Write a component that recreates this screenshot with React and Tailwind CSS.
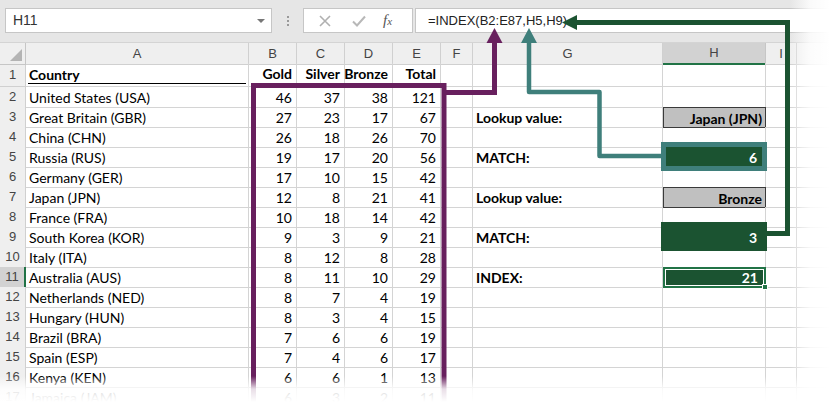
const data = [
  ["United States (USA)", 46, 37, 38, 121],
  ["Great Britain (GBR)", 27, 23, 17, 67],
  ["China (CHN)", 26, 18, 26, 70],
  ["Russia (RUS)", 19, 17, 20, 56],
  ["Germany (GER)", 17, 10, 15, 42],
  ["Japan (JPN)", 12, 8, 21, 41],
  ["France (FRA)", 10, 18, 14, 42],
  ["South Korea (KOR)", 9, 3, 9, 21],
  ["Italy (ITA)", 8, 12, 8, 28],
  ["Australia (AUS)", 8, 11, 10, 29],
  ["Netherlands (NED)", 8, 7, 4, 19],
  ["Hungary (HUN)", 8, 3, 4, 15],
  ["Brazil (BRA)", 7, 6, 6, 19],
  ["Spain (ESP)", 7, 4, 6, 17],
  ["Kenya (KEN)", 6, 6, 1, 13],
  ["Jamaica (JAM)", 6, 3, 2, 11],
];

const side = {
  3: { label: "Lookup value:", value: "Japan (JPN)", kind: "gray" },
  5: { label: "MATCH:", value: "6", kind: "teal" },
  7: { label: "Lookup value:", value: "Bronze", kind: "gray" },
  9: { label: "MATCH:", value: "3", kind: "green" },
  11: { label: "INDEX:", value: "21", kind: "sel" },
};

const cols = "grid grid-cols-[26px_223px_48px_48px_48px_48px_32px_190px_103px_31px_1fr]";
const cell = "border-r border-b border-[#d4d4d4] flex items-end pb-[2px] text-[14px] leading-none text-black whitespace-nowrap overflow-visible";
const num = `${cell} justify-end pr-[4px]`;

function RowHead({ n, selected }) {
  return (
    <div
      className={`flex items-center justify-center border-b border-r text-[13px] text-[#444] font-['Liberation_Sans'] ${
        selected
          ? "bg-[#d2d2d2] border-b-[#c6c6c6] border-r-2 border-r-[#217346]"
          : "bg-[#efefef] border-[#d0d0d0]"
      }`}
    >
      {n}
    </div>
  );
}

function HCell({ item }) {
  if (!item) return <div className={cell} />;
  if (item.kind === "gray")
    return (
      <div className="flex items-end justify-end border border-[#3a3a3a] bg-[#c0c0c0] pb-[1px] pr-[3px] text-[14px] font-bold leading-none text-black">
        {item.value}
      </div>
    );
  if (item.kind === "sel")
    return (
      <div className="relative flex items-end justify-end border-2 border-[#217346] bg-[#1b5331] pb-[1px] pr-[6px] text-[14px] font-bold leading-none text-white outline outline-1 -outline-offset-3 outline-white">
        {item.value}
        <span className="absolute -bottom-[4px] -right-[4px] h-[6px] w-[6px] border border-white bg-[#217346]" />
      </div>
    );
  return (
    <div className={`${cell} justify-end bg-[#1b5331] pr-[8px] font-bold text-white`}>{item.value}</div>
  );
}

export default function App() {
  return (
    <div className="relative h-[402px] w-[830px] overflow-hidden bg-white font-['Lato',sans-serif]">
      {/* formula bar */}
      <div className="flex h-[43px] items-start border-b border-[#d4d4d4] bg-[#e6e6e6] pl-[5px] pt-[8px]">
        <div className="flex h-[25px] w-[267px] items-center justify-between border border-[#c6c6c6] bg-white pl-[7px] pr-[6px] font-['Liberation_Sans'] text-[14px] text-[#333]">
          <span>H11</span>
          <span className="h-0 w-0 border-x-[4px] border-t-[4px] border-x-transparent border-t-[#777]" />
        </div>
        <div className="flex w-[31px] flex-col items-center justify-center gap-[2px] self-stretch pb-[8px]">
          <span className="h-[2px] w-[2px] bg-[#999]" />
          <span className="h-[2px] w-[2px] bg-[#999]" />
          <span className="h-[2px] w-[2px] bg-[#999]" />
        </div>
        <div className="flex h-[25px] w-[110px] items-center border border-[#c6c6c6] bg-white pl-[14px]">
          <svg width="14" height="14" viewBox="0 0 14 14" className="mr-[19px]">
            <path d="M2 2L12 12M12 2L2 12" stroke="#b0b0b0" strokeWidth="1.6" />
          </svg>
          <svg width="16" height="14" viewBox="0 0 16 14" className="mr-[16px]">
            <path d="M2 7.5L6 11.5L14 2.5" stroke="#b8b8b8" strokeWidth="2" fill="none" />
          </svg>
          <span className="font-['Liberation_Serif'] text-[15px] italic text-[#555]">
            f<span className="text-[11px]">x</span>
          </span>
        </div>
        <div className="ml-[2px] flex h-[25px] flex-1 items-center border border-[#c6c6c6] bg-white pl-[12px] font-['Liberation_Sans'] text-[13px] text-[#222]">
          =INDEX(B2:E87,H5,H9)
        </div>
      </div>

      {/* column headers */}
      <div className={`${cols} h-[20px] font-['Liberation_Sans'] text-[13px] text-[#444]`}>
        <div className="relative border-b border-r border-[#c6c6c6] bg-[#efefef]">
          <span className="absolute bottom-[3px] right-[3px] h-0 w-0 border-b-[12px] border-l-[12px] border-b-[#b4b4b4] border-l-transparent" />
        </div>
        {["A", "B", "C", "D", "E", "F", "G"].map((c) => (
          <div key={c} className="flex items-center justify-center border-b border-r border-[#d0d0d0] bg-[#efefef]">
            {c}
          </div>
        ))}
        <div className="flex items-center justify-center border-b-2 border-r border-b-[#217346] border-r-[#c6c6c6] bg-[#d2d2d2]">H</div>
        <div className="flex items-center justify-center border-b border-r border-[#d0d0d0] bg-[#efefef]">I</div>
        <div className="border-b border-[#d0d0d0] bg-[#efefef]" />
      </div>

      {/* row 1 */}
      <div className={`${cols} h-[24px]`}>
        <RowHead n={1} />
        <div className={`${cell} pl-[2px] font-bold`}>
          <span className="w-[218px] border-b border-black pb-[1px] pl-[1px]">Country</span>
        </div>
        {["Gold", "Silver", "Bronze", "Total"].map((h) => (
          <div key={h} className={`${num} pb-[5px] font-bold ${h === "Bronze" ? "pr-[2px]" : ""}`}>
            {h}
          </div>
        ))}
        <div className={cell} />
        <div className={cell} />
        <div className={cell} />
        <div className={cell} />
        <div className="border-b border-[#d4d4d4]" />
      </div>

      {data.map((r, i) => {
        const n = i + 2;
        const s = side[n];
        return (
          <div key={n} className={`${cols} h-[20px]`}>
            <RowHead n={n} selected={n === 11} />
            <div className={`${cell} pl-[3px]`}>{r[0]}</div>
            <div className={num}>{r[1]}</div>
            <div className={num}>{r[2]}</div>
            <div className={num}>{r[3]}</div>
            <div className={num}>{r[4]}</div>
            <div className={cell} />
            <div className={`${cell} pl-[3px] font-bold`}>{s ? s.label : ""}</div>
            <HCell item={s} />
            <div className={cell} />
            <div className="border-b border-[#d4d4d4]" />
          </div>
        );
      })}

      {/* arrows and outlines */}
      <svg className="pointer-events-none absolute left-0 top-0" width="830" height="402" viewBox="0 0 830 402">
        <rect x="253.5" y="85.5" width="190.5" height="340" fill="none" stroke="#68205e" strokeWidth="5" />
        <path d="M444 92.5H494.5V42" fill="none" stroke="#68205e" strokeWidth="5" />
        <path d="M494.5 28L486.5 43H502.5Z" fill="#68205e" />

        <path d="M529 42V92H599.5V156H661" fill="none" stroke="#3f7f7b" strokeWidth="4.5" strokeLinejoin="round" />
        <path d="M529 28L521 43H537Z" fill="#3f7f7b" />
        <rect x="663.5" y="144.5" width="101" height="24" fill="none" stroke="#3f7f7b" strokeWidth="5" />

        <rect x="663.5" y="224.5" width="101" height="24" fill="none" stroke="#1b5331" strokeWidth="5" />
        <path d="M767 233.5H787.5V22.5H576" fill="none" stroke="#1b5331" strokeWidth="5" />
        <path d="M562 22.5L577 15V30Z" fill="#1b5331" />
      </svg>

      {/* fades */}
      <div className="pointer-events-none absolute right-0 top-0 h-full w-[40px] bg-gradient-to-r from-white/0 via-white/80 to-white" />
      <div className="pointer-events-none absolute bottom-0 left-0 h-[26px] w-full bg-gradient-to-b from-white/0 via-white/85 to-white" />
    </div>
  );
}
